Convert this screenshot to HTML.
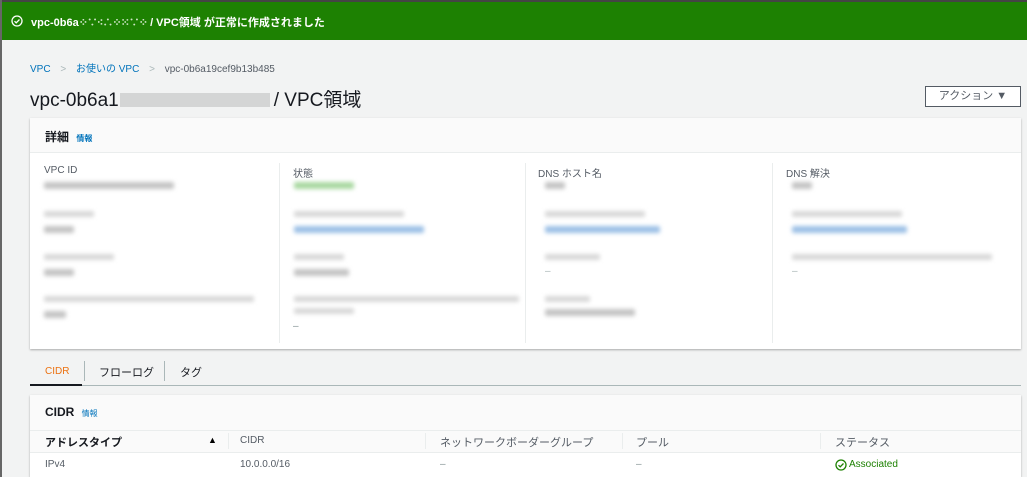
<!DOCTYPE html><html><head><meta charset="utf-8"><style>
*{box-sizing:border-box;margin:0;padding:0}
body{width:1027px;height:477px;overflow:hidden;background:#f2f3f3;font-family:"Liberation Sans","Noto Sans CJK JP",sans-serif;position:relative}
.a{position:absolute}
.b{position:absolute;filter:blur(2px);border-radius:2px}
.g{background:#c4c4c4}.l{background:#9cc0e6}.s{background:#d8d8d8}
.lab{font-size:10px;color:#545b64}
</style></head><body>
<div class="a" style="left:0;top:0;width:1027px;height:2px;background:#444"></div>
<div class="a" style="left:0;top:0;width:2px;height:477px;background:#666"></div>
<div class="a" style="left:2px;top:2px;width:1025px;height:38px;background:#1d8102;color:#fff;font-size:11px;font-weight:bold">
<svg class="a" style="left:9px;top:13px" width="12" height="12" viewBox="0 0 12 12"><circle cx="6" cy="6" r="5" fill="none" stroke="#fff" stroke-width="1.3"/><path d="M3.5 6.2l1.7 1.6 3.3-3.3" fill="none" stroke="#fff" stroke-width="1.3"/></svg>
<span class="a" style="left:29px;top:12px">vpc-0b6a<span style="color:#cde3c5;letter-spacing:-1px">⁘∵⁖∴⁘⁙∵⁘</span> / VPC領域 が正常に作成されました</span></div>
<div class="a" style="left:30px;top:60px;font-size:10px;color:#0073bb">VPC <span style="color:#aab7b8;margin:0 7px">&gt;</span> お使いの VPC <span style="color:#aab7b8;margin:0 7px">&gt;</span> <span style="color:#545b64">vpc-0b6a19cef9b13b485</span></div>
<div class="a" style="left:30px;top:85px;font-size:19px;color:#16191f;white-space:nowrap">vpc-0b6a1<span style="display:inline-block;width:150px;height:14px;background:#c8c8c8;opacity:.7;vertical-align:-1px;margin:0 4px 0 1px"></span>/ VPC領域</div>
<div class="a" style="left:925px;top:86px;width:96px;height:21px;border:1px solid #545b64;background:#fff;font-size:11px;color:#545b64;text-align:center;line-height:19px">アクション ▼</div>
<div class="a" style="left:30px;top:118px;width:991px;height:231px;background:#fff;box-shadow:0 1px 2px rgba(0,0,0,.3)">
<div class="a" style="left:0;top:0;width:100%;height:35px;background:#fafafa;border-bottom:1px solid #eaeded"></div>
<div class="a" style="left:15px;top:10px;font-size:12px;font-weight:bold;color:#16191f">詳細 <span style="font-size:8px;color:#0073bb;margin-left:4px">情報</span></div>
<div class="a" style="left:249px;top:45px;width:1px;height:180px;background:#eaeded"></div>
<div class="a" style="left:495px;top:45px;width:1px;height:180px;background:#eaeded"></div>
<div class="a" style="left:742px;top:45px;width:1px;height:180px;background:#eaeded"></div>
<div class="a lab" style="left:14px;top:47px">VPC ID</div>
<div class="a lab" style="left:263px;top:47px">状態</div>
<div class="a lab" style="left:508px;top:47px">DNS ホスト名</div>
<div class="a lab" style="left:756px;top:47px">DNS 解決</div>
<div class="b g" style="left:14px;top:64px;width:130px;height:7px"></div>
<div class="b" style="left:264px;top:64px;width:60px;height:7px;background:#a8d8a0"></div>
<div class="b g" style="left:515px;top:64px;width:20px;height:7px"></div>
<div class="b g" style="left:762px;top:64px;width:20px;height:7px"></div>

<div class="b s" style="left:14px;top:93px;width:50px;height:6px"></div>
<div class="b g" style="left:14px;top:108px;width:30px;height:7px"></div>
<div class="b s" style="left:264px;top:93px;width:110px;height:6px"></div>
<div class="b l" style="left:264px;top:108px;width:130px;height:7px"></div>
<div class="b s" style="left:515px;top:93px;width:100px;height:6px"></div>
<div class="b l" style="left:515px;top:108px;width:115px;height:7px"></div>
<div class="b s" style="left:762px;top:93px;width:110px;height:6px"></div>
<div class="b l" style="left:762px;top:108px;width:115px;height:7px"></div>

<div class="b s" style="left:14px;top:136px;width:70px;height:6px"></div>
<div class="b g" style="left:14px;top:151px;width:30px;height:7px"></div>
<div class="b s" style="left:264px;top:136px;width:50px;height:6px"></div>
<div class="b g" style="left:264px;top:151px;width:55px;height:7px"></div>
<div class="b s" style="left:515px;top:136px;width:55px;height:6px"></div>
<div class="a" style="left:515px;top:148px;font-size:10px;color:#aab7b8">–</div>
<div class="b s" style="left:762px;top:136px;width:200px;height:6px"></div>
<div class="a" style="left:762px;top:148px;font-size:10px;color:#aab7b8">–</div>

<div class="b s" style="left:14px;top:178px;width:210px;height:6px"></div>
<div class="b g" style="left:14px;top:193px;width:22px;height:7px"></div>
<div class="b s" style="left:264px;top:178px;width:225px;height:6px"></div>
<div class="b s" style="left:264px;top:190px;width:60px;height:6px"></div>
<div class="b s" style="left:515px;top:178px;width:45px;height:6px"></div>
<div class="b g" style="left:515px;top:191px;width:90px;height:7px"></div>
<div class="a" style="left:263px;top:203px;font-size:10px;color:#879596">–</div>
</div>
<div class="a" style="left:45px;top:366px;font-size:10px;color:#ec7211">CIDR</div>
<div class="a" style="left:84px;top:361px;width:1px;height:20px;background:#aab7b8"></div>
<div class="a" style="left:99px;top:364px;font-size:11px;color:#16191f">フローログ</div>
<div class="a" style="left:164px;top:361px;width:1px;height:20px;background:#aab7b8"></div>
<div class="a" style="left:180px;top:364px;font-size:11px;color:#16191f">タグ</div>
<div class="a" style="left:30px;top:385px;width:991px;height:1px;background:#aab7b8"></div>
<div class="a" style="left:30px;top:384px;width:52px;height:2px;background:#16191f"></div>
<div class="a" style="left:30px;top:395px;width:991px;height:82px;background:#fff;box-shadow:0 1px 2px rgba(0,0,0,.3)">
<div class="a" style="left:0;top:0;width:100%;height:57px;background:#fafafa"></div>
<div class="a" style="left:15px;top:10px;font-size:12px;font-weight:bold;color:#16191f">CIDR <span style="font-size:8px;color:#0073bb;font-weight:normal;margin-left:4px">情報</span></div>
<div class="a" style="left:0;top:35px;width:100%;height:1px;background:#eaeded"></div>
<div class="a" style="left:0;top:57px;width:100%;height:1px;background:#eaeded"></div>
<div class="a" style="left:15px;top:39px;font-size:11px;font-weight:bold;color:#16191f">アドレスタイプ</div>
<div class="a" style="left:178px;top:40px;font-size:9px">▲</div>
<div class="a" style="left:198px;top:38px;width:1px;height:16px;background:#eaeded"></div>
<div class="a" style="left:210px;top:40px;font-size:10px;color:#545b64">CIDR</div>
<div class="a" style="left:395px;top:38px;width:1px;height:16px;background:#eaeded"></div>
<div class="a" style="left:410px;top:39px;font-size:11px;color:#545b64">ネットワークボーダーグループ</div>
<div class="a" style="left:592px;top:38px;width:1px;height:16px;background:#eaeded"></div>
<div class="a" style="left:606px;top:39px;font-size:11px;color:#545b64">プール</div>
<div class="a" style="left:790px;top:38px;width:1px;height:16px;background:#eaeded"></div>
<div class="a" style="left:805px;top:39px;font-size:11px;color:#545b64">ステータス</div>
<div class="a" style="left:15px;top:64px;font-size:10px;color:#545b64">IPv4</div>
<div class="a" style="left:210px;top:64px;font-size:10px;color:#545b64">10.0.0.0/16</div>
<div class="a" style="left:410px;top:64px;font-size:10px;color:#879596">–</div>
<div class="a" style="left:606px;top:64px;font-size:10px;color:#879596">–</div>
<svg class="a" style="left:805px;top:64px" width="12" height="12" viewBox="0 0 12 12"><circle cx="6" cy="6" r="5" fill="none" stroke="#1d8102" stroke-width="1.3"/><path d="M3.5 6.2l1.7 1.6 3.3-3.3" fill="none" stroke="#1d8102" stroke-width="1.3"/></svg>
<div class="a" style="left:819px;top:64px;font-size:10px;color:#1d8102">Associated</div>
</div>
</body></html>
